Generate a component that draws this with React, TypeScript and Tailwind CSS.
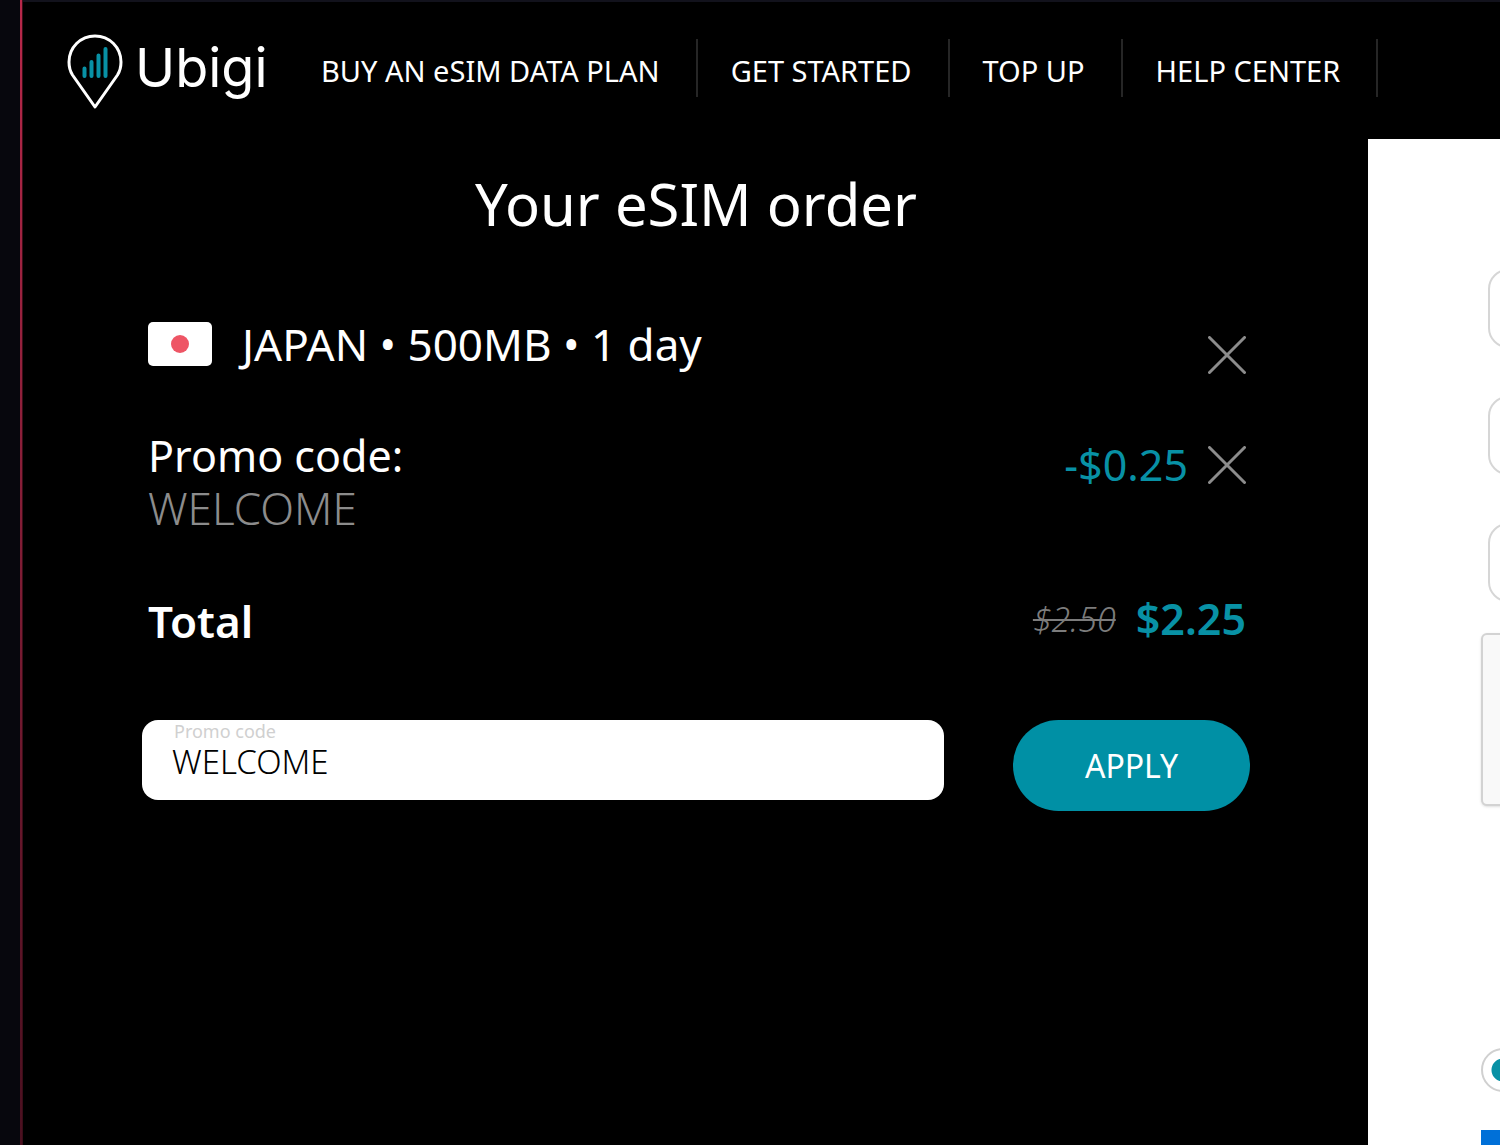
const navLinks = ['BUY AN eSIM DATA PLAN', 'GET STARTED', 'TOP UP', 'HELP CENTER'];

const fields = [
  { id: 'first-name', label: 'First name' },
  { id: 'last-name', label: 'Last name' },
  { id: 'email', label: 'Email' },
];

function Logo() {
  return (
    <a href="#" className="flex w-[221px] items-start text-white">
      <svg width="56" height="76" viewBox="0 0 56 76" fill="none" aria-hidden="true">
        <path
          d="M28 73 L5.5 41 C3 37 2 33 2 28 C2 13.500 13.5 2 28 2 C42.500 2 54 13.500 54 28 C54 33 53 37 50.500 41 Z"
          stroke="white"
          strokeWidth="3"
          strokeLinejoin="round"
        />
        <path d="M17.500 34.500v7.500M24.500 28v14M31.500 21.500v20.500M38.500 15v27" stroke="#0891a5" strokeWidth="4" strokeLinecap="round" />
      </svg>
      <span className="ml-3 font-['Inter',sans-serif] text-[54px] font-normal leading-[68px]">Ubigi</span>
    </a>
  );
}

function RemoveButton({ label }: { label: string }) {
  return (
    <button type="button" aria-label={label} className="shrink-0">
      <svg width="38" height="38" viewBox="0 0 38 38" stroke="#8c8c8c" strokeWidth="3" strokeLinecap="round">
        <path d="M1.500 1.500 36.500 36.500M36.500 1.500 1.500 36.500" />
      </svg>
    </button>
  );
}

export default function App() {
  return (
    <div className="flex min-h-screen overflow-hidden bg-[#07070d] font-['Noto_Sans',sans-serif]">
      <div className="w-5 shrink-0" />
      <div className="w-[3px] shrink-0 border-r border-[#3a0d18] bg-gradient-to-b from-[#b8284a] to-[#4a1020]" />

      <div className="flex min-w-0 flex-1 flex-col border-t-2 border-[#12121c] bg-black text-white">
        <header className="flex h-[137px] shrink-0 items-start pl-11 pt-8">
          <Logo />
          <nav className="mt-[5px] flex">
            {navLinks.map((link) => (
              <a
                key={link}
                href="#"
                className="flex h-[58px] items-center whitespace-nowrap border-r-2 border-[#262626] pl-[33px] pr-9 pt-1.5 text-[29px]"
              >
                {link}
              </a>
            ))}
          </nav>
        </header>

        <div className="flex flex-1">
          <main className="min-w-0 flex-1 pl-[119px] pr-[118px]">
            <h1 className="mt-6 text-center text-[58px] leading-[82px]">Your eSIM order</h1>

            <div className="mt-[69px] flex items-end justify-between pl-1.5 pr-1">
              <div className="flex items-center">
                <svg width="64" height="44" viewBox="0 0 64 44" role="img" aria-label="Japan">
                  <rect width="64" height="44" rx="5" fill="#fff" />
                  <circle cx="32" cy="22" r="9" fill="#ee5565" />
                </svg>
                <span className="ml-[30px] text-[44px] leading-[60px]">JAPAN • 500MB • 1 day</span>
              </div>
              <RemoveButton label="Remove plan" />
            </div>

            <div className="mt-[55px] flex items-start justify-between pl-1.5 pr-1">
              <div className="text-[43px] leading-[53px]">
                <p>Promo code:</p>
                <p className="text-[44px] font-light text-[#8c8c8c]">WELCOME</p>
              </div>
              <div className="flex items-center gap-5 pt-1.5">
                <span className="text-[43px] leading-[60px] text-[#0891a5]">-$0.25</span>
                <RemoveButton label="Remove promo code" />
              </div>
            </div>

            <div className="mt-[56px] flex items-start justify-between pl-1.5 pr-1">
              <span className="text-[44px] font-semibold leading-[60px]">Total</span>
              <div className="flex items-center gap-5 leading-[56px]">
                <s className="text-[34px] font-light italic text-[#7c7c7c] decoration-2">$2.50</s>
                <span className="text-[43px] font-semibold text-[#0891a5]">$2.25</span>
              </div>
            </div>

            <form className="mt-[69px] flex items-start gap-[69px]" onSubmit={(e) => e.preventDefault()}>
              <div className="flex h-20 min-w-0 flex-1 flex-col rounded-2xl bg-white px-[30px]">
                <label htmlFor="promo" className="pl-0.5 text-[18px] leading-[22px] text-[#d0d0d0]">
                  Promo code
                </label>
                <input
                  id="promo"
                  defaultValue="WELCOME"
                  className="w-full bg-transparent text-[33px] font-light leading-[40px] text-black outline-none"
                />
              </div>
              <button type="submit" className="h-[91px] w-[237px] rounded-full bg-[#0090a5] text-[32px]">
                APPLY
              </button>
            </form>
          </main>

          <aside className="flex w-[132px] shrink-0 flex-col overflow-hidden bg-white pl-[113px]">
            <div className="mt-[130px] flex flex-col gap-12 pl-[7px]">
              {fields.map((field) => (
                <input
                  key={field.id}
                  id={field.id}
                  aria-label={field.label}
                  className="h-[79px] w-[600px] shrink-0 rounded-[20px] border-2 border-[#d6d6d6]"
                />
              ))}
            </div>
            <div className="mt-[31px] h-[173px] w-[600px] shrink-0 rounded-md border-2 border-[#d3d3d3] bg-[#f9f9f9] shadow-sm" />
            <input
              type="radio"
              defaultChecked
              aria-label="Payment method"
              className="mt-[242px] h-11 w-11 shrink-0 appearance-none rounded-full border-2 border-[#d0d0d0] bg-white bg-[radial-gradient(circle,#0891a5_11px,transparent_12px)]"
            />
            <button type="button" aria-label="Pay" className="mt-[38px] min-h-[15px] w-[600px] flex-1 bg-[#0070d8]" />
          </aside>
        </div>
      </div>
    </div>
  );
}
